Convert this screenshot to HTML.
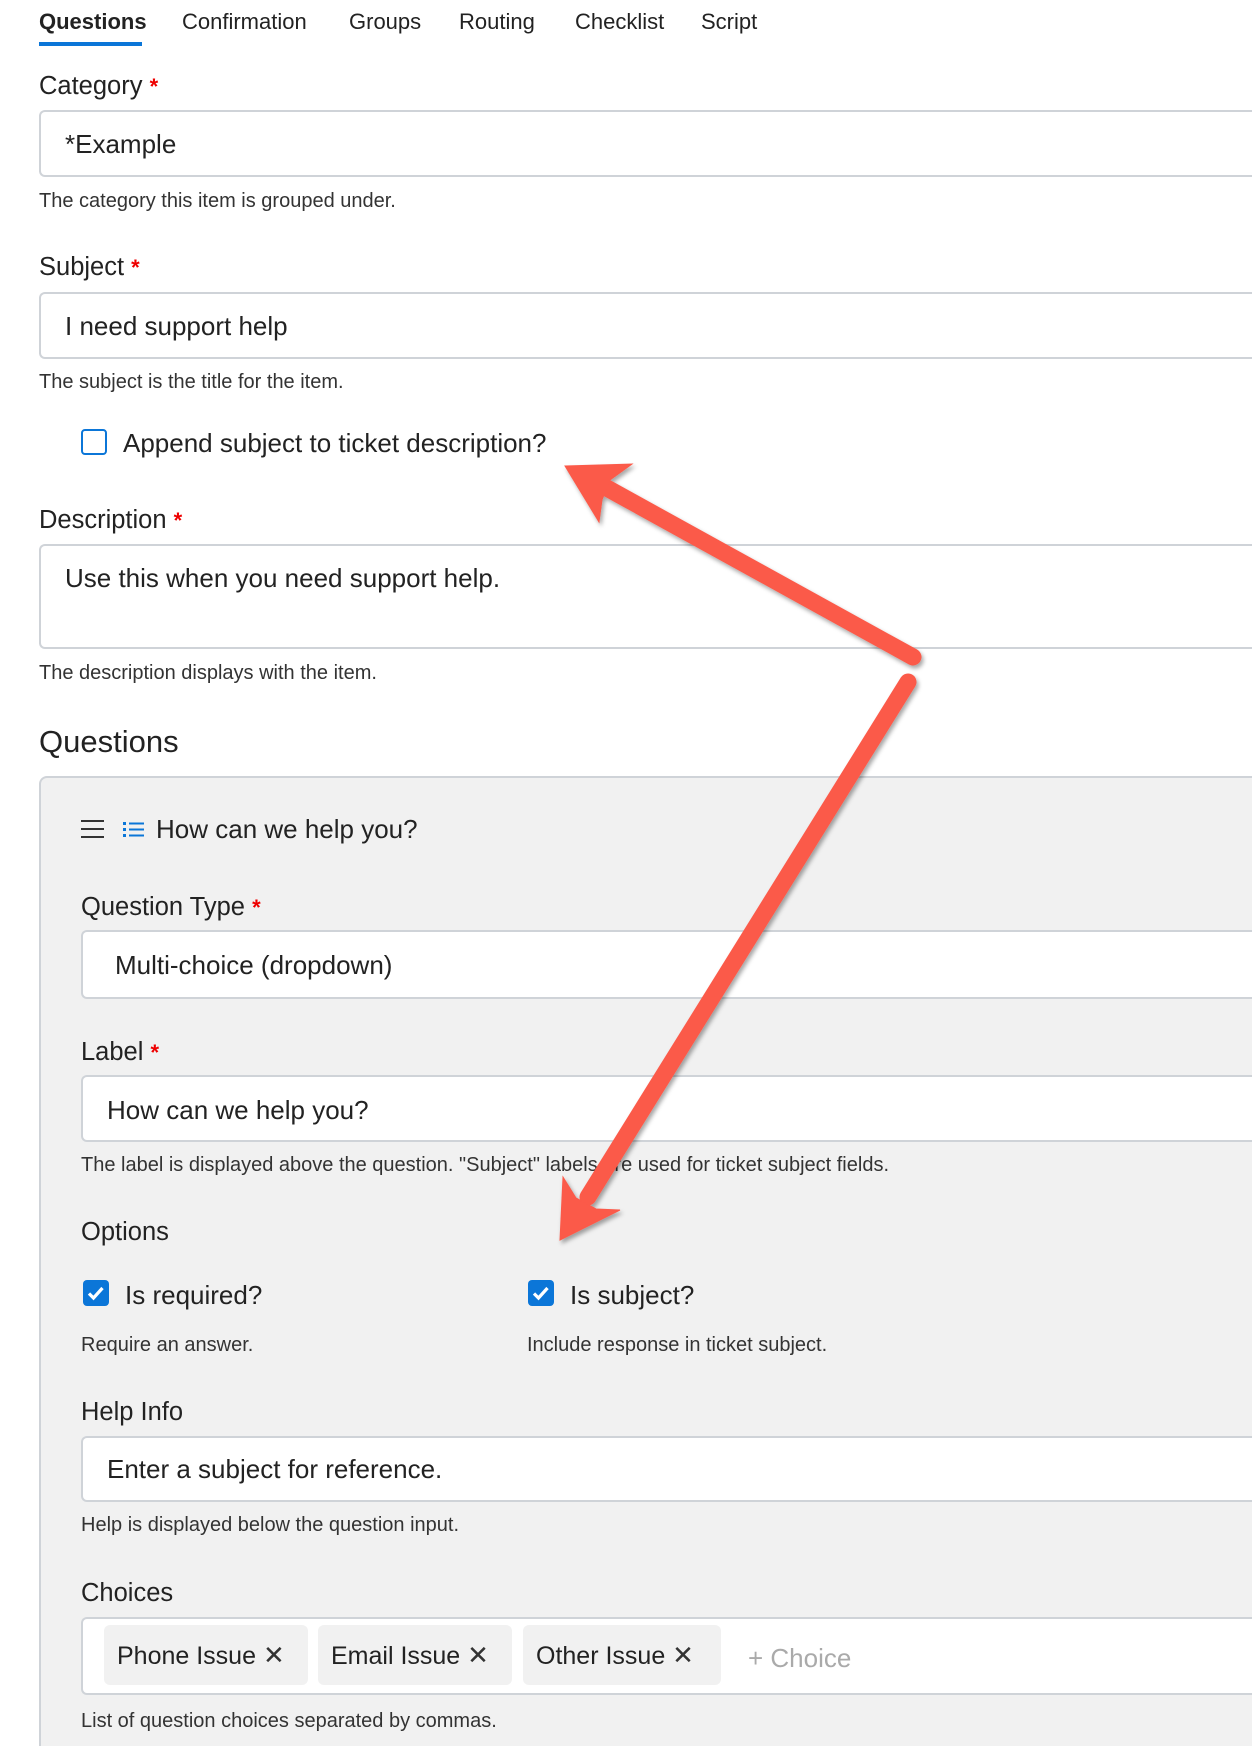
<!DOCTYPE html>
<html><head><meta charset="utf-8"><style>
html,body{margin:0;width:1252px;height:1746px;overflow:hidden}
body{background:#fff;font-family:"Liberation Sans",sans-serif;color:#222;position:relative}
.a{position:absolute;white-space:nowrap}
.tab{font-size:22px;top:9px;color:#222}
.lbl{font-size:25.5px}
.req{color:#e00;font-weight:bold;font-size:22px}
.inp{position:absolute;left:39px;width:1213px;background:#fff;border:2px solid #cfd3d8;border-right:none;border-radius:6px 0 0 6px;box-sizing:border-box}
.in2{left:81px;width:1171px}
.txt{font-size:26px}
.help{font-size:20px;color:#333}
.cb{position:absolute;width:26px;height:26px;border-radius:4px;background:#0b76d8}
.chip{position:absolute;top:1625px;height:60px;background:#f1f1f1;border-radius:6px;font-size:25px;line-height:60px;box-sizing:border-box;padding-left:13px}
.x{font-size:26px;font-weight:100;color:#333}
</style></head><body>
<div class="a tab" style="left:39px;font-weight:bold">Questions</div>
<div style="position:absolute;left:39px;top:42px;width:103px;height:4px;background:#0b76d8"></div>
<div class="a tab" style="left:182px">Confirmation</div>
<div class="a tab" style="left:349px">Groups</div>
<div class="a tab" style="left:459px">Routing</div>
<div class="a tab" style="left:575px">Checklist</div>
<div class="a tab" style="left:701px">Script</div>

<div class="a lbl" style="left:39px;top:72px">Category <span class="req">*</span></div>
<div class="inp" style="top:110px;height:67px"></div>
<div class="a txt" style="left:65px;top:129px">*Example</div>
<div class="a help" style="left:39px;top:190px">The category this item is grouped under.</div>

<div class="a lbl" style="left:39px;top:253px">Subject <span class="req">*</span></div>
<div class="inp" style="top:292px;height:67px"></div>
<div class="a txt" style="left:65px;top:311px">I need support help</div>
<div class="a help" style="left:39px;top:371px">The subject is the title for the item.</div>

<div style="position:absolute;left:81px;top:429px;width:26px;height:26px;border:2px solid #0b76d8;border-radius:4px;box-sizing:border-box"></div>
<div class="a txt" style="left:123px;top:428px">Append subject to ticket description?</div>

<div class="a lbl" style="left:39px;top:506px">Description <span class="req">*</span></div>
<div class="inp" style="top:544px;height:105px"></div>
<div class="a txt" style="left:65px;top:563px">Use this when you need support help.</div>
<div class="a help" style="left:39px;top:662px">The description displays with the item.</div>

<div class="a" style="left:39px;top:724px;font-size:31px">Questions</div>
<div style="position:absolute;left:39px;top:776px;width:1213px;height:970px;background:#f1f1f1;border:2px solid #cfd3d8;border-right:none;border-bottom:none;border-radius:8px 0 0 0;box-sizing:border-box"></div>
<svg class="a" style="left:80px;top:818px" width="70" height="24"><g stroke="#333" stroke-width="2"><line x1="1" y1="3" x2="24" y2="3"/><line x1="1" y1="11" x2="24" y2="11"/><line x1="1" y1="19" x2="24" y2="19"/></g><g fill="#0b76d8"><rect x="43" y="4" width="3" height="3"/><rect x="43" y="10" width="3" height="3"/><rect x="43" y="16" width="3" height="3"/><rect x="49" y="4.5" width="15" height="2"/><rect x="49" y="10.5" width="15" height="2"/><rect x="49" y="16.5" width="15" height="2"/></g></svg>
<div class="a txt" style="left:156px;top:814px">How can we help you?</div>

<div class="a lbl" style="left:81px;top:893px">Question Type <span class="req">*</span></div>
<div class="inp in2" style="top:930px;height:69px"></div>
<div class="a txt" style="left:115px;top:950px">Multi-choice (dropdown)</div>

<div class="a lbl" style="left:81px;top:1038px">Label <span class="req">*</span></div>
<div class="inp in2" style="top:1075px;height:67px"></div>
<div class="a txt" style="left:107px;top:1095px">How can we help you?</div>
<div class="a help" style="left:81px;top:1154px">The label is displayed above the question. "Subject" labels are used for ticket subject fields.</div>

<div class="a lbl" style="left:81px;top:1218px">Options</div>
<div class="cb" style="left:83px;top:1280px"></div>
<svg class="a" style="left:83px;top:1280px" width="26" height="26"><path d="M6 13.5l4.5 4.5 9-10" stroke="#fff" stroke-width="3.2" fill="none"/></svg>
<div class="a txt" style="left:125px;top:1280px">Is required?</div>
<div class="cb" style="left:528px;top:1280px"></div>
<svg class="a" style="left:528px;top:1280px" width="26" height="26"><path d="M6 13.5l4.5 4.5 9-10" stroke="#fff" stroke-width="3.2" fill="none"/></svg>
<div class="a txt" style="left:570px;top:1280px">Is subject?</div>
<div class="a help" style="left:81px;top:1334px">Require an answer.</div>
<div class="a help" style="left:527px;top:1334px">Include response in ticket subject.</div>

<div class="a lbl" style="left:81px;top:1398px">Help Info</div>
<div class="inp in2" style="top:1436px;height:66px"></div>
<div class="a txt" style="left:107px;top:1454px">Enter a subject for reference.</div>
<div class="a help" style="left:81px;top:1514px">Help is displayed below the question input.</div>

<div class="a lbl" style="left:81px;top:1579px">Choices</div>
<div class="inp in2" style="top:1617px;height:78px"></div>
<div class="chip" style="left:104px;width:204px">Phone Issue <span class="x">✕</span></div>
<div class="chip" style="left:318px;width:194px">Email Issue <span class="x">✕</span></div>
<div class="chip" style="left:523px;width:198px">Other Issue <span class="x">✕</span></div>
<div class="a txt" style="left:748px;top:1643px;color:#aaa">+ Choice</div>
<div class="a help" style="left:81px;top:1710px">List of question choices separated by commas.</div>

<svg class="a" style="left:0;top:0" width="1252" height="1746">
<defs><filter id="s"><feDropShadow dx="2" dy="3" stdDeviation="2" flood-color="#000" flood-opacity="0.35"/></filter></defs>
<g filter="url(#s)" fill="#fb5a4a" stroke="#fb5a4a">
<line x1="913" y1="657" x2="605" y2="487" stroke-width="17" stroke-linecap="round"/>
<polygon points="565,466 632,464 610,480 602,500 599,522" stroke-width="1"/>
<line x1="908" y1="682" x2="588" y2="1197" stroke-width="17" stroke-linecap="round"/>
<polygon points="560,1240 563,1177 576,1198 596,1209 620,1210" stroke-width="1"/>
</g></svg>
</body></html>
